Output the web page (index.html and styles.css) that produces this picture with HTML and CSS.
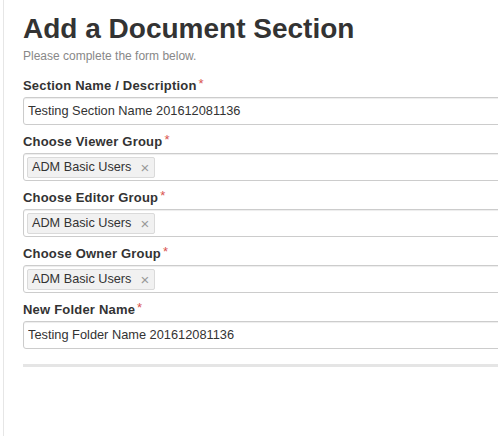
FILE: index.html
```html
<!DOCTYPE html>
<html lang="en">
<head>
<meta charset="utf-8">
<title>Add a Document Section</title>
<link rel="stylesheet" href="styles.css">
</head>
<body>
<div class="page">
  <h1 class="title">Add a Document Section</h1>
  <p class="subtitle">Please complete the form below.</p>
  <form class="form">
    <div class="field">
      <label class="label">Section Name / Description<span class="req">*</span></label>
      <input class="control" type="text" value="Testing Section Name 201612081136">
    </div>
    <div class="field">
      <label class="label">Choose Viewer Group<span class="req">*</span></label>
      <div class="control tags"><span class="tag">ADM Basic Users<span class="tag-x">×</span></span></div>
    </div>
    <div class="field">
      <label class="label">Choose Editor Group<span class="req">*</span></label>
      <div class="control tags"><span class="tag">ADM Basic Users<span class="tag-x">×</span></span></div>
    </div>
    <div class="field">
      <label class="label">Choose Owner Group<span class="req">*</span></label>
      <div class="control tags"><span class="tag">ADM Basic Users<span class="tag-x">×</span></span></div>
    </div>
    <div class="field field-last">
      <label class="label">New Folder Name<span class="req">*</span></label>
      <input class="control" type="text" value="Testing Folder Name 201612081136">
    </div>
    <div class="divider"></div>
  </form>
</div>
</body>
</html>
```

FILE: styles.css
```css
html, body {
  margin: 0;
  padding: 0;
  background: #ffffff;
  overflow: hidden;
}

body {
  font-family: "Liberation Sans", Arial, sans-serif;
  color: #333333;
}

.page {
  margin-left: 3px;
  border-left: 1px solid #e6e6e6;
  padding: 13px 0 0 19px;
  min-height: 100vh;
  box-sizing: border-box;
}

.title {
  margin: 0;
  font-size: 28px;
  line-height: 32px;
  font-weight: bold;
  color: #333333;
  white-space: nowrap;
}

.subtitle {
  margin: 4px 0 0;
  font-size: 12px;
  line-height: 14px;
  color: #888888;
}

.form {
  margin-top: 15px;
  width: 620px;
}

.field {
  margin-bottom: 9px;
}

.field-last {
  margin-bottom: 0;
}

.label {
  display: block;
  font-size: 13px;
  line-height: 16px;
  height: 16px;
  font-weight: bold;
  letter-spacing: 0.2px;
  color: #333333;
  margin-bottom: 3px;
}

.req {
  color: #d9534f;
  font-weight: normal;
  margin-left: 2px;
  line-height: 0;
  vertical-align: 2px;
  letter-spacing: 0;
}

.control {
  display: block;
  box-sizing: border-box;
  width: 100%;
  height: 28px;
  margin: 0;
  padding: 2px 4px 4px;
  border: 1px solid #cccccc;
  border-radius: 3px;
  box-shadow: inset 0 1px 1px rgba(0, 0, 0, 0.075);
  background: #ffffff;
  font-family: "Liberation Sans", Arial, sans-serif;
  font-size: 12.8px;
  color: #333333;
  outline: none;
}

.tags {
  display: flex;
  align-items: center;
  padding: 0 3px;
}

.tag {
  display: inline-flex;
  align-items: center;
  box-sizing: border-box;
  height: 21px;
  padding: 0 5px 0 4px;
  border: 1px solid #dadada;
  border-radius: 2px;
  background: #f1f1f1;
  font-size: 12.7px;
  line-height: 19px;
  color: #333333;
}

.tag-x {
  margin-left: 9px;
  color: #999999;
  font-size: 15px;
}

.divider {
  margin-top: 15px;
  border-top: 3px solid #e5e5e5;
}
```
